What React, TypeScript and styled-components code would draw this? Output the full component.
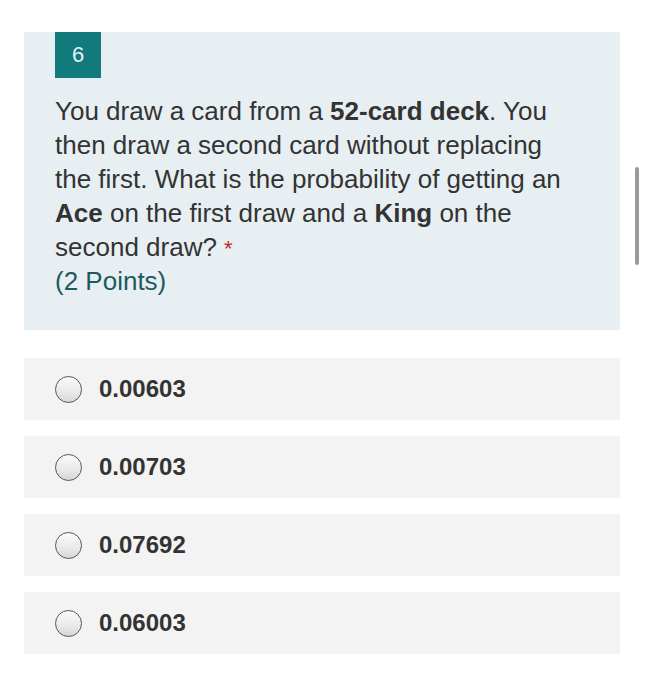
import { createGlobalStyle, styled } from 'styled-components';

const GlobalStyle = createGlobalStyle`
  html, body {
    margin: 0;
    padding: 0;
    background: #fff;
  }
  body {
    font-family: 'Liberation Sans', Arial, sans-serif;
    color: #333;
  }
`;

const options = ['0.00603', '0.00703', '0.07692', '0.06003'];

const App = () => {
  return (
    <>
      <GlobalStyle />
      <Page>
        <QuestionCard>
          <Badge>6</Badge>
          <QuestionText>
            You draw a card from a <b>52-card deck</b>. You then draw a second card without replacing
            the first. What is the probability of getting an <b>Ace</b> on the first draw and a{' '}
            <b>King</b> on the second draw? <Required>*</Required>
          </QuestionText>
          <Points>(2 Points)</Points>
        </QuestionCard>
        <OptionList>
          {options.map((opt) => (
            <OptionRow key={opt}>
              <Radio />
              <OptionLabel>{opt}</OptionLabel>
            </OptionRow>
          ))}
        </OptionList>
      </Page>
      <ScrollThumb />
    </>
  );
};

export default App;

const Page = styled.div`
  width: 596px;
  padding: 32px 0 0 24px;
  display: flex;
  flex-direction: column;
  gap: 28px;
`;

const QuestionCard = styled.div`
  background: #e7eff2;
  padding: 0 31px 32px;
  display: flex;
  flex-direction: column;
  align-items: flex-start;
`;

const Badge = styled.div`
  width: 46px;
  height: 46px;
  background: #137a7c;
  color: #e8f0f4;
  font-size: 22px;
  display: flex;
  align-items: center;
  justify-content: center;
  margin-bottom: 16px;
`;

const QuestionText = styled.div`
  width: 530px;
  font-size: 26px;
  line-height: 34px;
  color: #333;

  b {
    font-weight: bold;
  }
`;

const Required = styled.span`
  color: #c4262e;
  font-size: 22px;
  line-height: 1;
`;

const Points = styled.div`
  font-size: 26px;
  line-height: 34px;
  color: #1d5a5e;
`;

const OptionList = styled.div`
  display: flex;
  flex-direction: column;
  gap: 16px;
`;

const OptionRow = styled.div`
  height: 62px;
  background: #f3f3f3;
  display: flex;
  align-items: center;
  padding-left: 31px;
  gap: 17px;
`;

const Radio = styled.span`
  width: 25px;
  height: 25px;
  border-radius: 50%;
  border: 1.5px solid #555;
  background: linear-gradient(180deg, #fbfbfb 0%, #e9e9e9 60%, #d6d6d6 100%);
  flex-shrink: 0;
`;

const OptionLabel = styled.span`
  font-size: 24px;
  font-weight: bold;
  color: #333;
`;

const ScrollThumb = styled.div`
  position: fixed;
  left: 635px;
  top: 167px;
  width: 4px;
  height: 98px;
  border-radius: 2px;
  background: #9a9a9a;
`;
